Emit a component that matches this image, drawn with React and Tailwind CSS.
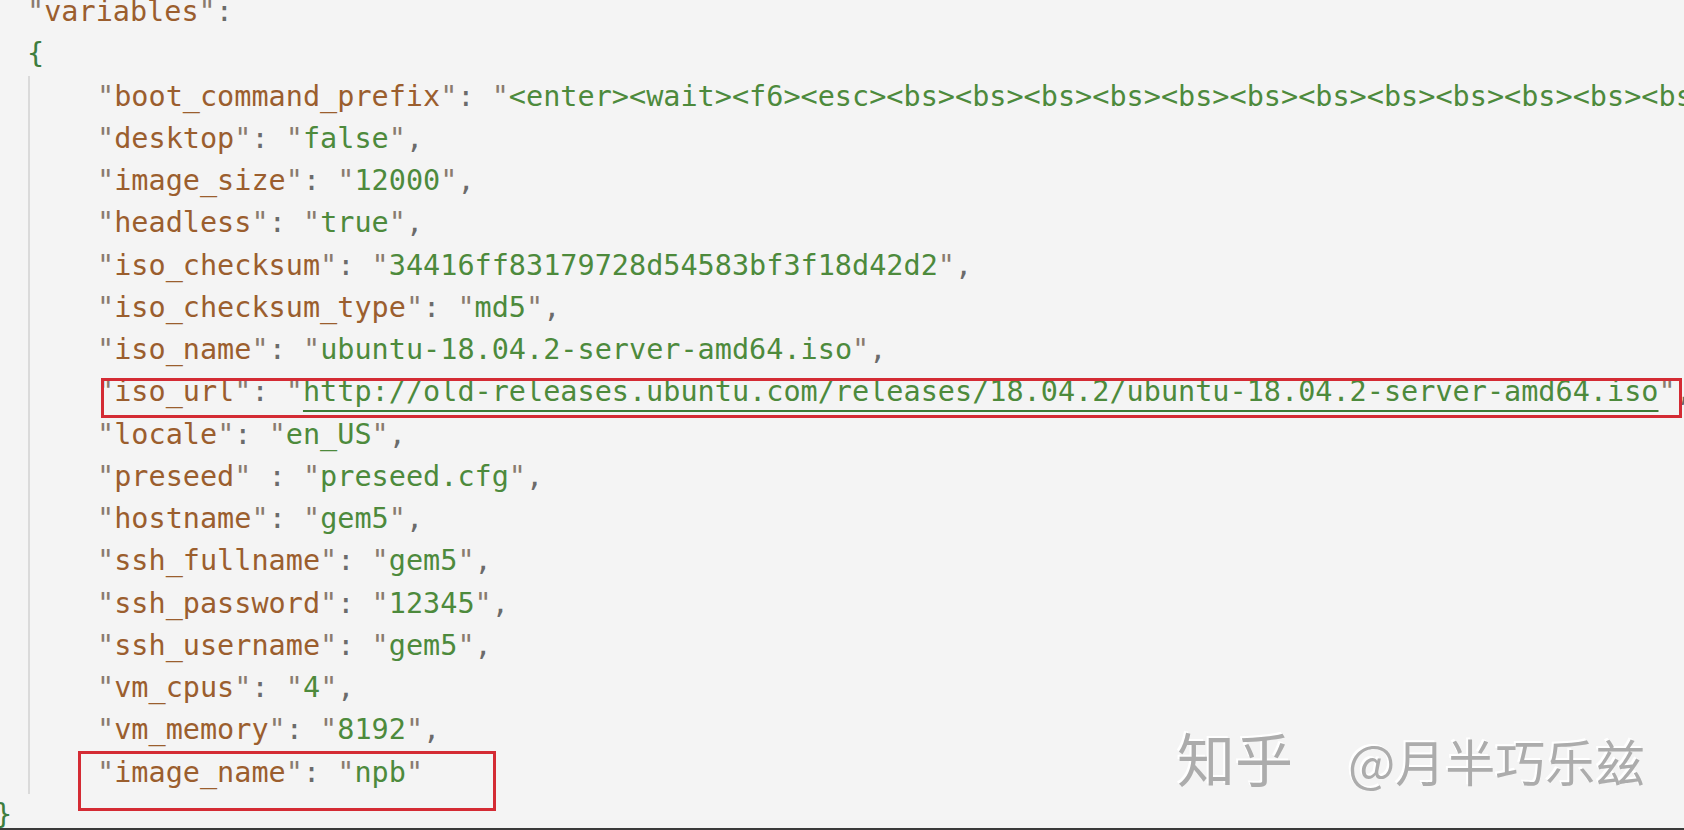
const rows = [
  ["boot_command_prefix", "<enter><wait><f6><esc>" + "<bs>".repeat(20), ": ", ","],
  ["desktop", "false", ": ", ","],
  ["image_size", "12000", ": ", ","],
  ["headless", "true", ": ", ","],
  ["iso_checksum", "34416ff83179728d54583bf3f18d42d2", ": ", ","],
  ["iso_checksum_type", "md5", ": ", ","],
  ["iso_name", "ubuntu-18.04.2-server-amd64.iso", ": ", ","],
  ["iso_url", "http://old-releases.ubuntu.com/releases/18.04.2/ubuntu-18.04.2-server-amd64.iso", ": ", ",", true],
  ["locale", "en_US", ": ", ","],
  ["preseed", "preseed.cfg", " : ", ","],
  ["hostname", "gem5", ": ", ","],
  ["ssh_fullname", "gem5", ": ", ","],
  ["ssh_password", "12345", ": ", ","],
  ["ssh_username", "gem5", ": ", ","],
  ["vm_cpus", "4", ": ", ","],
  ["vm_memory", "8192", ": ", ","],
  ["image_name", "npb", ": ", ""],
];

function Q() {
  return <span className="text-[#8a7b6e]">"</span>;
}

function Row({ k, v, sep, end, link }) {
  return (
    <div>
      <Q />
      <span className="text-[#9b5e2e]">{k}</span>
      <Q />
      <span className="text-[#6b6b6b]">{sep}</span>
      <Q />
      {link ? (
        <span className="text-[#4d8a3c] underline decoration-[#3f7a35] decoration-2 underline-offset-[9px]">{v}</span>
      ) : (
        <span className="text-[#4d8a3c]">{v}</span>
      )}
      <Q />
      <span className="text-[#6b6b6b]">{end}</span>
    </div>
  );
}

export default function App() {
  return (
    <div className="relative w-[1684px] h-[830px] overflow-hidden bg-[#f4f4f4]">
      <div className="mt-[-9px] pl-[27px] font-['DejaVu_Sans_Mono',monospace] text-[28.5px] leading-[42.25px] whitespace-pre">
        <div>
          <Q />
          <span className="text-[#9b5e2e]">variables</span>
          <Q />
          <span className="text-[#6b6b6b]">:</span>
        </div>
        <div className="text-[#3d7d3d]">{"{"}</div>
        <div className="ml-[1px] pl-[67px] border-l-2 border-[#dadada]">
          {rows.map(([k, v, sep, end, link]) => (
            <Row key={k} k={k} v={v} sep={sep} end={end} link={link} />
          ))}
        </div>
        <div className="ml-[-32px] text-[#3d7d3d]">{"}"}</div>
      </div>

      <div className="absolute left-[101px] top-[378px] w-[1581px] h-[40px] border-[3px] border-[#d42b34]" />
      <div className="absolute left-[78px] top-[751px] w-[418px] h-[60px] border-[3px] border-[#d42b34]" />

      <div className="absolute left-[1177px] top-[728px] flex items-baseline font-['Noto_Sans_CJK_SC',sans-serif] leading-none text-[#acacac] whitespace-pre [text-shadow:-2px_-2px_0_#ffffff]">
        <span className="text-[58px]">知乎</span>
        <span className="pl-[55px] text-[50px]">@月半巧乐兹</span>
      </div>

      <div className="absolute left-0 bottom-0 w-full h-[2px] bg-[#3a3a3a]" />
    </div>
  );
}
